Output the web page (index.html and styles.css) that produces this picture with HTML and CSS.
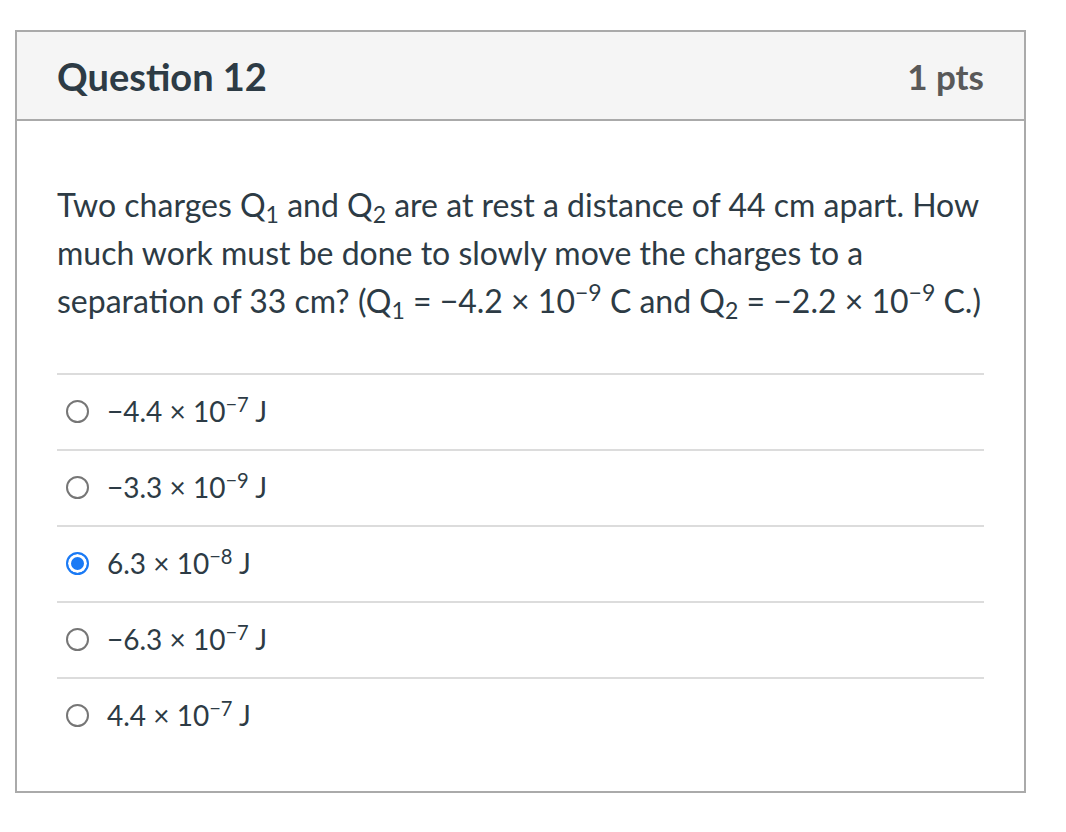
FILE: index.html
```html
<!DOCTYPE html>
<html lang="en">
<head>
<meta charset="utf-8">
<title>Question 12</title>
<link rel="stylesheet" href="styles.css">
</head>
<body>
<div class="card">
  <div class="card-header">
    <h2 class="title">Question 12</h2>
    <span class="pts">1 pts</span>
  </div>
  <div class="card-body">
    <p class="question">Two charges Q<sub>1</sub> and Q<sub>2</sub> are at rest a distance of 44 cm apart. How much work must be done to slowly move the charges to a separation of 33 cm? (Q<sub>1</sub> = −4.2 × 10<sup>−9</sup> C and Q<sub>2</sub> = −2.2 × 10<sup>−9</sup> C.)</p>
    <div class="answers">
      <label class="answer"><input type="radio" name="a" class="radio"><span class="answer-text">−4.4 × 10<sup>−7</sup> J</span></label>
      <label class="answer"><input type="radio" name="a" class="radio"><span class="answer-text">−3.3 × 10<sup>−9</sup> J</span></label>
      <label class="answer"><input type="radio" name="a" class="radio" checked><span class="answer-text">6.3 × 10<sup>−8</sup> J</span></label>
      <label class="answer"><input type="radio" name="a" class="radio"><span class="answer-text">−6.3 × 10<sup>−7</sup> J</span></label>
      <label class="answer"><input type="radio" name="a" class="radio"><span class="answer-text">4.4 × 10<sup>−7</sup> J</span></label>
    </div>
  </div>
</div>
</body>
</html>
```
FILE: styles.css
```css
* { box-sizing: border-box; }
html, body { margin: 0; padding: 0; background: #fff; }
body {
  font-family: Lato, "Open Sans", sans-serif;
  color: #2d3b45;
}
.card {
  margin: 30px 0 0 15px;
  width: 1011px;
  border: 2px solid #aaaaaa;
  background: #fff;
}
.card-header {
  display: flex;
  justify-content: space-between;
  align-items: center;
  height: 89px;
  padding: 0 40px 0 40px;
  background: #f5f5f5;
  border-bottom: 2px solid #aaaaaa;
}
.title {
  margin: 0;
  font-size: 38px;
  font-weight: 700;
  color: #2d3b45;
}
.pts {
  font-size: 35px;
  font-weight: 700;
  color: #595959;
}
.card-body {
  padding: 60px 40px 38px 40px;
}
.question {
  margin: 0 0 48px 0;
  font-size: 32px;
  line-height: 48px;
}
sub, sup {
  font-size: 0.72em;
  line-height: 0;
  position: relative;
  vertical-align: baseline;
}
sub { bottom: -0.25em; }
sup { top: -0.5em; }
.answers { display: flex; flex-direction: column; }
.answer {
  display: flex;
  align-items: center;
  height: 76px;
  border-top: 2px solid #dcdcdc;
  padding: 0 0 2px 9px;
  font-size: 28px;
}
.radio {
  appearance: none;
  -webkit-appearance: none;
  margin: 0 18px 0 0;
  width: 23px;
  height: 23px;
  border: 2px solid #767676;
  border-radius: 50%;
  background: #fff;
  flex: none;
}
.radio:checked {
  border: 2px solid #1a7af5;
  background: #1a7af5;
  box-shadow: inset 0 0 0 3px #fff;
}
.answer-text { line-height: 1; }
```
